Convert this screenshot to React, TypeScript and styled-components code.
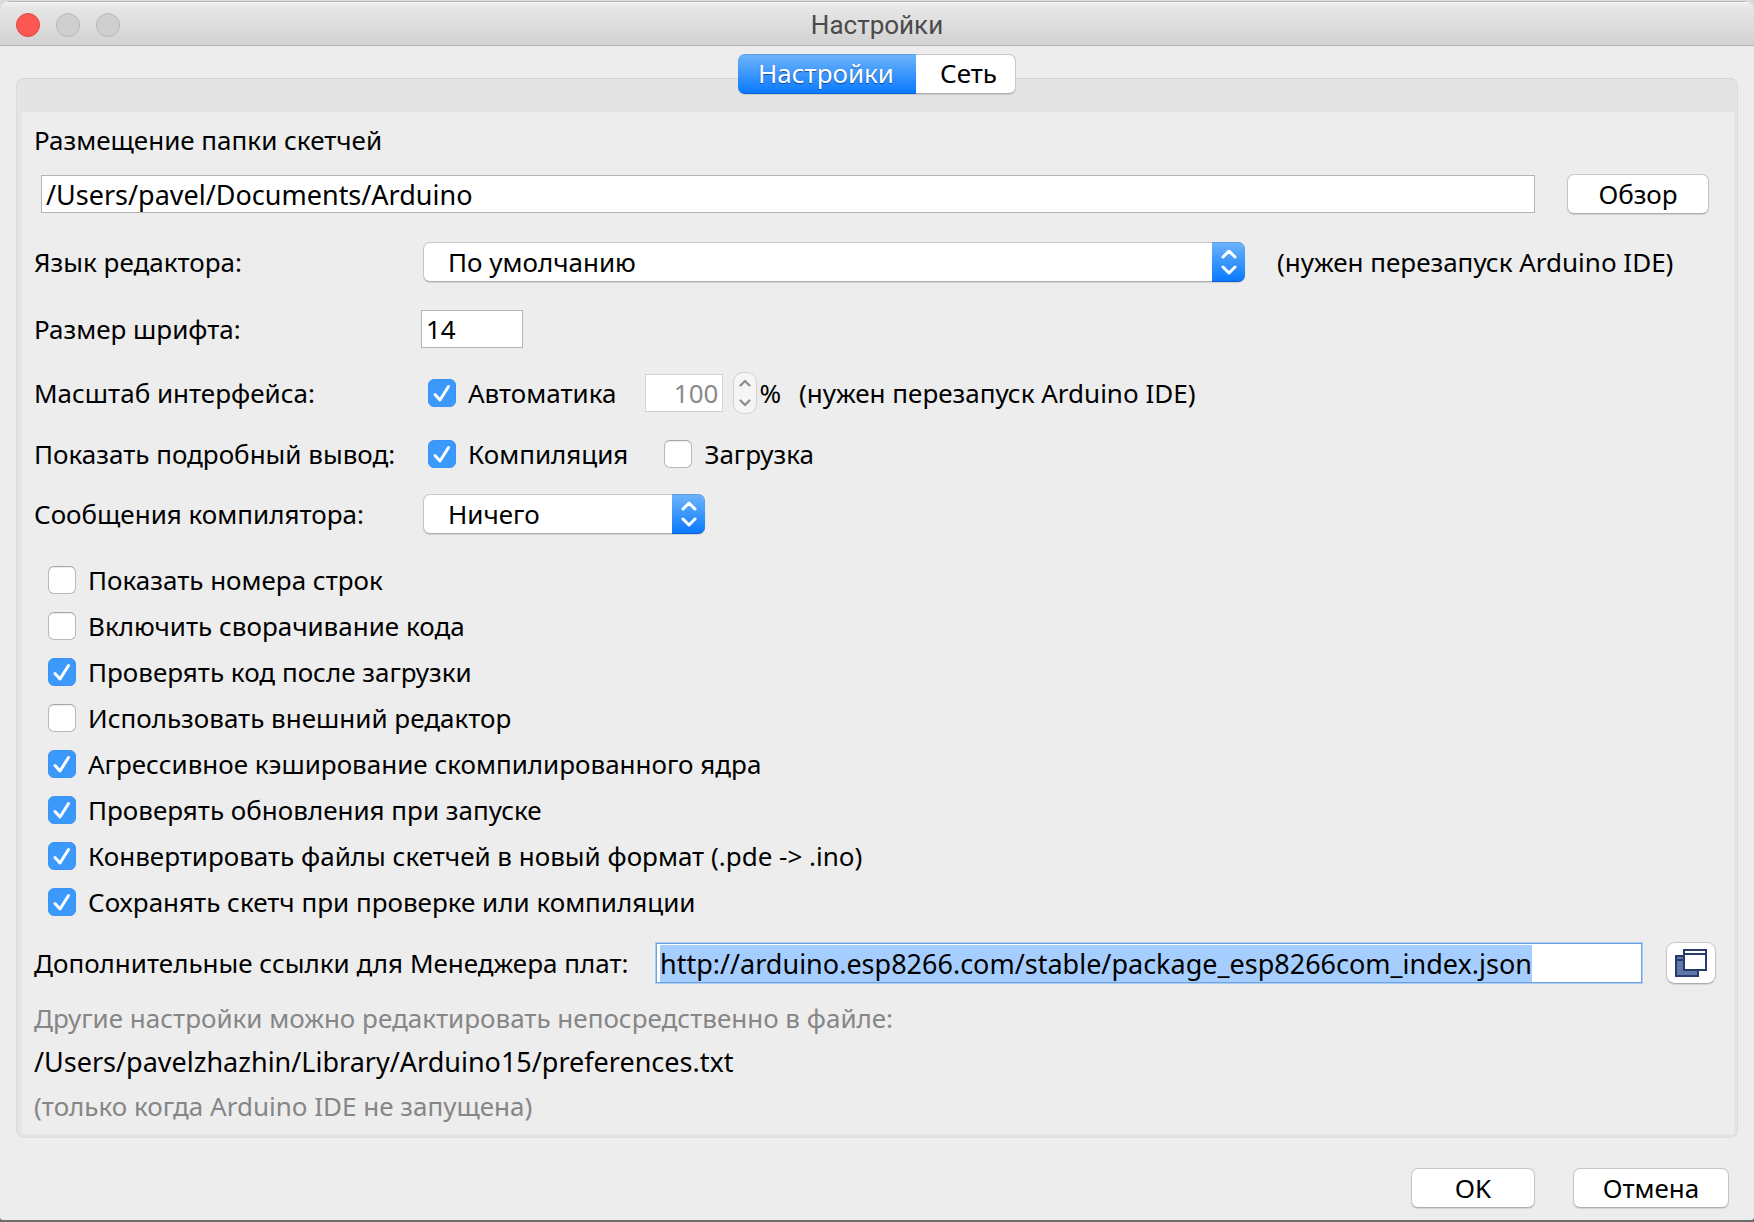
import React, { useEffect, useId, useRef, useState } from 'react';
import styled, { createGlobalStyle, css } from 'styled-components';

const UI_FONT = '"Noto Sans", "Open Sans", sans-serif';
const TITLE_FONT = 'Roboto, "Noto Sans", sans-serif';

const GlobalStyle = createGlobalStyle`
  * { box-sizing: border-box; }
  body { margin: 0; background: #d9dcd8; }
  button, input, select { font: inherit; color: inherit; margin: 0; }
`;

const Desktop = styled.div`
  min-height: 100vh;
  display: flex;
  flex-direction: column;
  padding: 1px 0 2px;
  background: linear-gradient(#d9dcd8 50%, #6c6c6a 50%);
  font: 26px/32px ${UI_FONT};
  color: #000;
`;

const Window = styled.main`
  flex: 1;
  display: flex;
  flex-direction: column;
  background: #ededed;
  border-radius: 10px 10px 3px 3px;
  overflow: hidden;
`;

const TitleBar = styled.header`
  display: grid;
  grid-template-columns: 1fr auto 1fr;
  align-items: center;
  height: 45px;
  padding: 2px 16px 0;
  border-top: 1px solid #b9b9b9;
  border-bottom: 1px solid #b1b1b1;
  background: linear-gradient(#f0f0f0, #e6e6e6 15%, #d2d2d2);
  box-shadow: inset 0 1px #f6f6f6;
`;

const Lights = styled.div`
  display: flex;
  gap: 16px;
`;

const Light = styled.button<{ $active?: boolean }>`
  width: 24px;
  height: 24px;
  padding: 0;
  border-radius: 50%;
  border: 1px solid ${p => (p.$active ? '#e2443f' : '#b8b8b8')};
  background: ${p => (p.$active ? '#fc5753' : '#cfcfcf')};
`;

const Title = styled.h1`
  margin: 0;
  font: 400 26px/32px ${TITLE_FONT};
  color: #4b4b4b;
`;

const Body = styled.div`
  flex: 1;
  display: flex;
  flex-direction: column;
  padding: 8px 16px 0;
`;

const Tabs = styled.div`
  position: relative;
  z-index: 1;
  display: flex;
  justify-content: center;
  margin-bottom: -16px;
`;

const raised = css`
  border: 1px solid #c6c6c6;
  border-bottom-color: #adadad;
  border-radius: 7px;
  background: #fff;
  box-shadow: 0 1px 1px rgba(0, 0, 0, 0.12);
`;

const Tab = styled.button<{ $selected?: boolean }>`
  height: 40px;
  ${raised}
  padding: 0 18px 2px 24px;
  border-left: 0;
  border-radius: 0 7px 7px 0;
  ${p => p.$selected && css`
    padding: 0 22px 2px 20px;
    color: #fff;
    text-shadow: 0 1px 1px rgba(0, 30, 90, 0.6);
    border: 0;
    border-top: 1px solid #5c9fea;
    border-bottom: 1px solid #0a5fd8;
    border-radius: 7px 0 0 7px;
    background: linear-gradient(#6cb3fa, #0a7aff);
  `}
`;

const Panel = styled.section`
  flex: 1;
  padding: 33px 3px 3px 5px;
  border: 1px solid #dadada;
  border-top-color: #d4d4d4;
  border-radius: 8px;
  border-bottom-color: #dedede;
  background: #e4e4e4;
`;

const Form = styled.form`
  height: 100%;
  padding: 12px;
  background: #ededed;
`;

const Row = styled.div<{ $top?: number }>`
  display: flex;
  align-items: center;
  margin-top: ${p => p.$top ?? 24}px;
`;

const Caption = styled.label`
  flex: 0 0 387px;
  white-space: nowrap;
`;

const Heading = styled.label`
  display: block;
`;

const Note = styled.span`
  white-space: nowrap;
`;

const Field = styled.input<{ $grow?: boolean }>`
  height: 38px;
  min-width: 0;
  ${p => (p.$grow ? 'flex: 1; font-size: 27px;' : 'width: 102px;')}
  padding: 0 4px;
  border: 1px solid #b4b4b4;
  border-radius: 0;
  background: #fff;
  outline: none;
`;

const UrlField = styled(Field)`
  height: 40px;
  padding: 3px;
  border-color: #6fa3e0;
  box-shadow: 0 0 0 1px #a9cdf6;
  &::selection { background: rgba(164, 205, 255, 0.99); color: #000; }
`;

const ScaleField = styled(Field)`
  width: 78px;
  text-align: right;
  border-color: #d2d2d2;
  color: #8b8b8b;
  background: #fff;
`;

const Stepper = styled.div`
  display: flex;
  flex-direction: column;
  width: 24px;
  height: 42px;
  margin: 0 2px 0 10px;
  border: 1px solid #d2d2d2;
  border-radius: 10px;
  background: #f5f5f5;
  overflow: hidden;
`;

const StepButton = styled.button`
  flex: 1;
  display: grid;
  place-items: center;
  padding: 0;
  border: 0;
  background: none;
  color: #8f8f8f;
`;

const PushButton = styled.button<{ $width: number }>`
  ${raised}
  display: grid;
  place-items: center;
  width: ${p => p.$width}px;
  height: 40px;
  padding: 0;
`;

const IconButton = styled(PushButton)`
  height: 42px;
  border-radius: 9px;
`;

const SelectBox = styled.div<{ $width: number }>`
  position: relative;
  width: ${p => p.$width}px;
  margin-left: 2px;
`;

const Select = styled.select`
  ${raised}
  display: block;
  appearance: none;
  width: 100%;
  height: 40px;
  padding: 0 40px 0 24px;
  outline: none;
`;

const SelectCap = styled.span`
  position: absolute;
  inset: 0 0 0 auto;
  width: 33px;
  display: grid;
  place-items: center;
  pointer-events: none;
  color: #fff;
  border-radius: 0 7px 7px 0;
  border-top: 1px solid #5c9fea;
  border-bottom: 1px solid #0a5fd8;
  background: linear-gradient(#6cb3fa, #0a7aff);
`;

const CheckLabel = styled.label`
  display: flex;
  align-items: center;
  gap: 12px;
  white-space: nowrap;
`;

const CheckCell = styled.span`
  display: grid;
  margin-left: 7px;
  > * { grid-area: 1 / 1; }
  svg { pointer-events: none; }
`;

const CheckInput = styled.input`
  appearance: none;
  width: 28px;
  height: 28px;
  border: 1px solid #b9b9b9;
  border-top-color: #a6a6a6;
  border-radius: 6px;
  background: #fff;
  box-shadow: inset 0 1px 1px rgba(0, 0, 0, 0.08);
  &:checked {
    border-color: #3b93f7;
    background: #3b99fc;
    box-shadow: none;
  }
`;

const CheckList = styled.div`
  display: flex;
  flex-direction: column;
  gap: 14px;
  margin: 30px 0 0 7px;
`;

const Footnotes = styled.div`
  display: flex;
  flex-direction: column;
  gap: 12px;
  margin-top: 18px;
  p { margin: 0; }
`;

const Muted = styled.p`
  color: #868686;
`;

const FilePath = styled.p`
  font-size: 27px;
`;

const Actions = styled.footer`
  display: flex;
  justify-content: flex-end;
  gap: 38px;
  padding: 30px 9px 12px;
`;

function Chevrons() {
  return (
    <svg width="18" height="26" viewBox="0 0 18 26" fill="none" stroke="currentColor" strokeWidth="3" strokeLinecap="round" strokeLinejoin="round">
      <path d="M3 8 9 2 15 8M3 18 9 24 15 18" />
    </svg>
  );
}

function StepArrow({ up }: { up?: boolean }) {
  return (
    <svg width="12" height="8" viewBox="0 0 12 8" fill="none" stroke="currentColor" strokeWidth="2.4" strokeLinecap="round" strokeLinejoin="round">
      <path d={up ? 'M1.5 6.5 6 2 10.5 6.5' : 'M1.5 1.5 6 6 10.5 1.5'} />
    </svg>
  );
}

function WindowsIcon() {
  return (
    <svg width="32" height="28" viewBox="0 0 32 28">
      <rect x="1" y="7" width="22" height="20" fill="#6078a8" stroke="#283c6c" strokeWidth="2" />
      <path d="M1 11h8" stroke="#283c6c" strokeWidth="2" />
      <rect x="9" y="1" width="22" height="20" fill="#fff" stroke="#283c6c" strokeWidth="2" />
      <path d="M9 5h22" stroke="#283c6c" strokeWidth="2" />
    </svg>
  );
}

function Check({ label, on }: { label: string; on?: boolean }) {
  const [checked, setChecked] = useState(!!on);
  return (
    <CheckLabel>
      <CheckCell>
        <CheckInput type="checkbox" checked={checked} onChange={e => setChecked(e.target.checked)} />
        {checked && (
          <svg width="28" height="28" viewBox="0 0 28 28" fill="none" stroke="#fff" strokeWidth="3" strokeLinecap="round" strokeLinejoin="round">
            <path d="M7 15.5 12 21 20.5 7.5" />
          </svg>
        )}
      </CheckCell>
      {label}
    </CheckLabel>
  );
}

function PopUp({ id, width, options }: { id: string; width: number; options: string[] }) {
  return (
    <SelectBox $width={width}>
      <Select id={id}>
        {options.map(o => <option key={o}>{o}</option>)}
      </Select>
      <SelectCap><Chevrons /></SelectCap>
    </SelectBox>
  );
}

const OPTIONS: [string, boolean][] = [
  ['Показать номера строк', false],
  ['Включить сворачивание кода', false],
  ['Проверять код после загрузки', true],
  ['Использовать внешний редактор', false],
  ['Агрессивное кэширование скомпилированного ядра', true],
  ['Проверять обновления при запуске', true],
  ['Конвертировать файлы скетчей в новый формат (.pde -> .ino)', true],
  ['Сохранять скетч при проверке или компиляции', true],
];

const PairCell = styled.div<{ $gap: number }>`
  display: flex;
  margin-right: ${p => p.$gap}px;
`;

const PathRow = styled(Row)`
  gap: 32px;
  margin-left: 7px;
  padding-right: 13px;
`;

const UrlRow = styled(Row)`
  height: 42px;
  padding-right: 6px;
`;

const UrlCaption = styled.label`
  flex: 0 0 622px;
  white-space: nowrap;
`;

export default function App() {
  const uid = useId();
  const urlRef = useRef<HTMLInputElement>(null);

  useEffect(() => {
    urlRef.current?.focus();
    urlRef.current?.select();
  }, []);

  return (
    <Desktop>
      <GlobalStyle />
      <Window>
        <TitleBar>
          <Lights>
            <Light $active aria-label="Закрыть" />
            <Light aria-label="Свернуть" disabled />
            <Light aria-label="Развернуть" disabled />
          </Lights>
          <Title>Настройки</Title>
        </TitleBar>
        <Body>
          <Tabs role="tablist">
            <Tab $selected role="tab" aria-selected="true">Настройки</Tab>
            <Tab role="tab" aria-selected="false">Сеть</Tab>
          </Tabs>
          <Panel>
            <Form onSubmit={e => e.preventDefault()}>
              <Heading htmlFor={uid + 'path'}>Размещение папки скетчей</Heading>
              <PathRow $top={18}>
                <Field $grow id={uid + 'path'} defaultValue="/Users/pavel/Documents/Arduino" />
                <PushButton type="button" $width={142}>Обзор</PushButton>
              </PathRow>
              <Row $top={28}>
                <Caption htmlFor={uid + 'lang'}>Язык редактора:</Caption>
                <PairCell $gap={32}><PopUp id={uid + 'lang'} width={822} options={['По умолчанию']} /></PairCell>
                <Note>(нужен перезапуск Arduino IDE)</Note>
              </Row>
              <Row $top={28}>
                <Caption htmlFor={uid + 'size'}>Размер шрифта:</Caption>
                <Field id={uid + 'size'} defaultValue="14" />
              </Row>
              <Row>
                <Caption htmlFor={uid + 'scale'}>Масштаб интерфейса:</Caption>
                <PairCell $gap={29}><Check label="Автоматика" on /></PairCell>
                <ScaleField id={uid + 'scale'} defaultValue="100" disabled />
                <Stepper>
                  <StepButton type="button" disabled aria-label="Больше"><StepArrow up /></StepButton>
                  <StepButton type="button" disabled aria-label="Меньше"><StepArrow /></StepButton>
                </Stepper>
                <PairCell $gap={18}>%</PairCell>
                <Note>(нужен перезапуск Arduino IDE)</Note>
              </Row>
              <Row>
                <Caption as="span">Показать подробный вывод:</Caption>
                <PairCell $gap={29}><Check label="Компиляция" on /></PairCell>
                <Check label="Загрузка" />
              </Row>
              <Row>
                <Caption htmlFor={uid + 'warn'}>Сообщения компилятора:</Caption>
                <PopUp id={uid + 'warn'} width={282} options={['Ничего']} />
              </Row>
              <CheckList>
                {OPTIONS.map(([label, on]) => <Check key={label} label={label} on={on} />)}
              </CheckList>
              <UrlRow>
                <UrlCaption htmlFor={uid + 'urls'}>Дополнительные ссылки для Менеджера плат:</UrlCaption>
                <UrlField
                  $grow
                  ref={urlRef}
                  id={uid + 'urls'}
                  defaultValue="http://arduino.esp8266.com/stable/package_esp8266com_index.json"
                />
                <PairCell $gap={24} />
                <IconButton type="button" $width={50} aria-label="Открыть список ссылок"><WindowsIcon /></IconButton>
              </UrlRow>
              <Footnotes>
                <Muted>Другие настройки можно редактировать непосредственно в файле:</Muted>
                <FilePath>/Users/pavelzhazhin/Library/Arduino15/preferences.txt</FilePath>
                <Muted>(только когда Arduino IDE не запущена)</Muted>
              </Footnotes>
            </Form>
          </Panel>
          <Actions>
            <PushButton type="button" $width={124}>OK</PushButton>
            <PushButton type="button" $width={156}>Отмена</PushButton>
          </Actions>
        </Body>
      </Window>
    </Desktop>
  );
}
